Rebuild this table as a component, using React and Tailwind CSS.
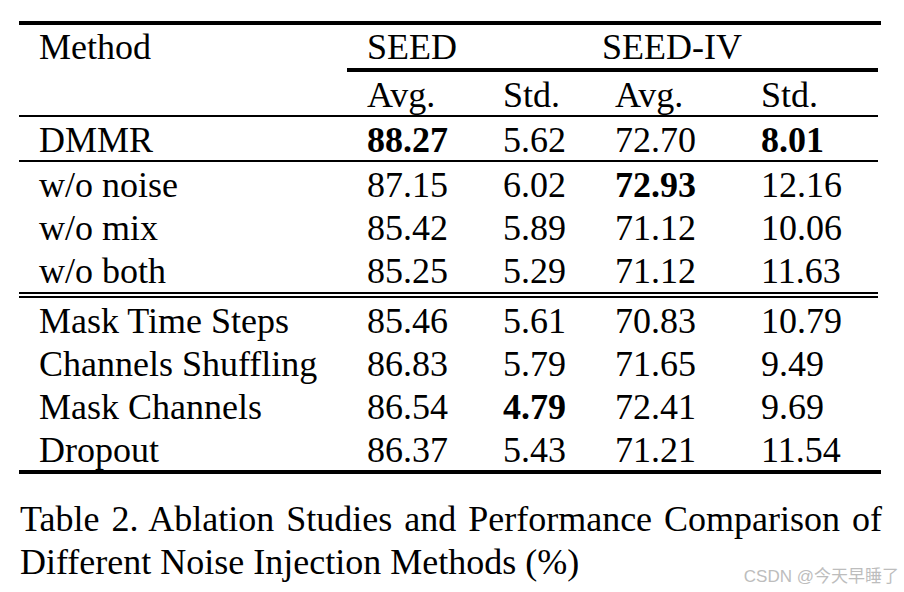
import React from "react";

const rowsA = [
  ["w/o noise", "87.15", "6.02", "72.93", "12.16", [3]],
  ["w/o mix", "85.42", "5.89", "71.12", "10.06", []],
  ["w/o both", "85.25", "5.29", "71.12", "11.63", []],
];
const rowsB = [
  ["Mask Time Steps", "85.46", "5.61", "70.83", "10.79", []],
  ["Channels Shuffling", "86.83", "5.79", "71.65", "9.49", []],
  ["Mask Channels", "86.54", "4.79", "72.41", "9.69", [2]],
  ["Dropout", "86.37", "5.43", "71.21", "11.54", []],
];

function Row({ r }) {
  return (
    <div className="grid grid-cols-[348px_136px_112px_146px_117px] h-[43px] leading-[47px] whitespace-nowrap overflow-hidden">
      {r.slice(0, 5).map((c, i) => (
        <div key={i} className={(i === 0 ? "pl-[20px] " : "") + (r[5].includes(i) ? "font-bold" : "")}>
          {c}
        </div>
      ))}
    </div>
  );
}

export default function App() {
  return (
    <div className="w-[904px] h-[592px] bg-white relative font-['Liberation_Serif',serif] text-black text-[36px] overflow-hidden">
      <div className="pt-[21px] pl-[19px]">
        <div className="w-[862px] h-[4px] bg-black" />
        <div className="w-[859px]">
          <div className="flex">
            <div className="w-[328px] pl-[20px] h-[43px] leading-[45px]">Method</div>
            <div className="w-[531px]">
              <div className="flex h-[43px] leading-[45px] overflow-hidden">
                <div className="pl-[20px] w-[255px]">SEED</div>
                <div>SEED-IV</div>
              </div>
              <div className="h-[4px] bg-black" />
              <div className="grid grid-cols-[136px_112px_146px_117px] h-[43px] leading-[46px] pl-[20px] overflow-hidden">
                <div>Avg.</div>
                <div>Std.</div>
                <div>Avg.</div>
                <div>Std.</div>
              </div>
            </div>
          </div>
          <div className="h-[2px] bg-black" />
          <Row r={["DMMR", "88.27", "5.62", "72.70", "8.01", [1, 4]]} />
          <div className="h-[2px] bg-black" />
          {rowsA.map((r, i) => (
            <Row key={i} r={r} />
          ))}
          <div className="h-[2px] bg-black mt-[1px]" />
          <div className="h-[2px]" />
          <div className="h-[2px] bg-black" />
          {rowsB.map((r, i) => (
            <Row key={i} r={r} />
          ))}
          <div className="h-[4px] bg-black w-[862px]" />
        </div>
        <div className="pt-[24px] pl-[1px] text-[36px] leading-[43px] w-[863px]">
          <div className="whitespace-nowrap text-justify [text-align-last:justify]">Table 2. Ablation Studies and Performance Comparison of</div>
          <div className="whitespace-nowrap">Different Noise Injection Methods (%)</div>
        </div>
      </div>
      <div className="absolute right-[5px] top-[566px] text-[17px] leading-[22px] text-[#bdbdbd] font-['Liberation_Sans','Noto_Sans_CJK_SC',sans-serif] whitespace-nowrap">
        CSDN @今天早睡了
      </div>
    </div>
  );
}
